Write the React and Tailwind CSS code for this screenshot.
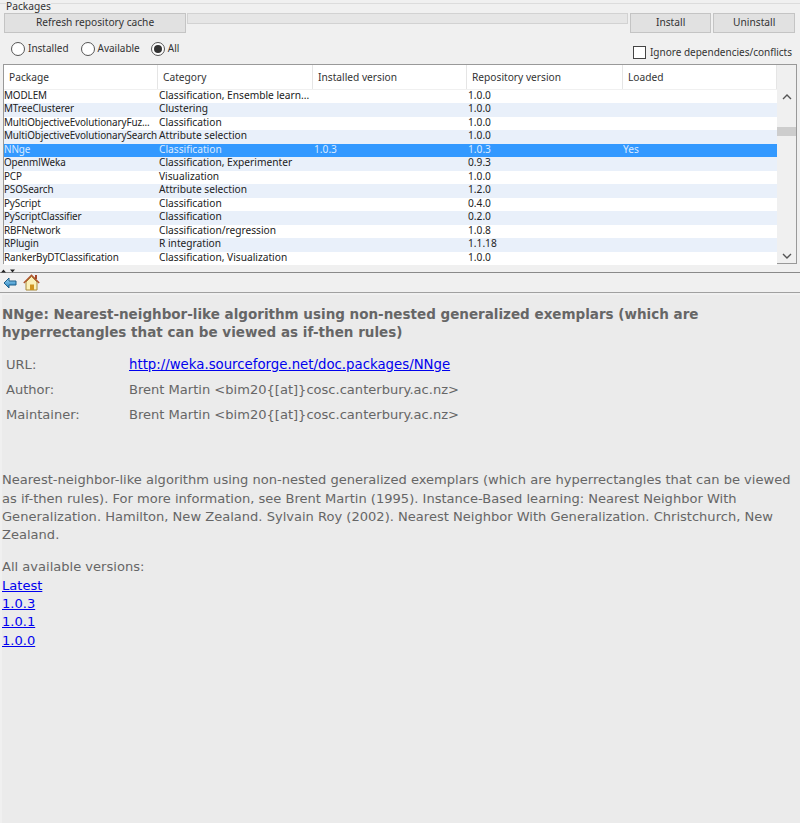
import React from 'react';

const rows = [
  ['MODLEM', 'Classification, Ensemble learn...', '', '1.0.0', ''],
  ['MTreeClusterer', 'Clustering', '', '1.0.0', ''],
  ['MultiObjectiveEvolutionaryFuz...', 'Classification', '', '1.0.0', ''],
  ['MultiObjectiveEvolutionarySearch', 'Attribute selection', '', '1.0.0', ''],
  ['NNge', 'Classification', '1.0.3', '1.0.3', 'Yes'],
  ['OpenmlWeka', 'Classification, Experimenter', '', '0.9.3', ''],
  ['PCP', 'Visualization', '', '1.0.0', ''],
  ['PSOSearch', 'Attribute selection', '', '1.2.0', ''],
  ['PyScript', 'Classification', '', '0.4.0', ''],
  ['PyScriptClassifier', 'Classification', '', '0.2.0', ''],
  ['RBFNetwork', 'Classification/regression', '', '1.0.8', ''],
  ['RPlugin', 'R integration', '', '1.1.18', ''],
  ['RankerByDTClassification', 'Classification, Visualization', '', '1.0.0', ''],
];

const widths = ['w-[155px]', 'w-[155px]', 'w-[154px]', 'w-[155px]', 'w-[154px]'];
const headWidths = ['w-[154px]', 'w-[155px]', 'w-[154px]', 'w-[156px]', 'w-[154px]'];
const headers = ['Package', 'Category', 'Installed version', 'Repository version', 'Loaded'];

function Radio({ label, checked }) {
  return (
    <div className="flex items-center gap-[3px]">
      <span className="w-[14px] h-[14px] rounded-full border border-[#555] bg-white flex items-center justify-center">
        {checked && <span className="w-[8px] h-[8px] rounded-full bg-[#333]" />}
      </span>
      <span>{label}</span>
    </div>
  );
}

function HomeIcon() {
  return (
    <svg width="17" height="17" viewBox="0 0 17 17">
      <path d="M3 8v8h11V8L8.500 2.500z" fill="#fbf0b8" stroke="#a88a3a" />
      <path d="M0.800 9l7.700-7.700L16.200 9" fill="none" stroke="#b0552c" strokeWidth="1.500" />
      <rect x="12" y="1" width="2" height="4" fill="#a5482a" />
      <rect x="7" y="10.500" width="4" height="5.500" fill="#d0941f" />
    </svg>
  );
}

function BackIcon() {
  return (
    <svg width="14" height="12" viewBox="0 0 14 12">
      <defs>
        <linearGradient id="arrowFill" x1="0" y1="0" x2="0" y2="1">
          <stop offset="0" stopColor="#9fd6f2" />
          <stop offset="1" stopColor="#1f7fbf" />
        </linearGradient>
      </defs>
      <path d="M6 1L1 6l5 5V8h7V4H6z" fill="url(#arrowFill)" stroke="#1d5f8a" />
    </svg>
  );
}

export default function App() {
  return (
    <div className="w-[800px] h-[823px] overflow-hidden flex flex-col bg-[#f0f0f0] text-[#333] text-[10.2px] font-['Noto_Sans',sans-serif]">
      <div className="h-[292px] shrink-0 flex flex-col">
        <div className="relative h-[13px] border-t border-[#dcdcdc] mt-[3px]">
          <span className="absolute left-[6px] -top-[4px] bg-[#f0f0f0] leading-[12px]">Packages</span>
        </div>
        <div className="flex h-[20px] -mt-[3px] ml-[4px] mr-[5px] gap-[1px]">
          <button className="w-[183px] h-[20px] bg-[#e1e1e1] border border-[#c4c4c4]">Refresh repository cache</button>
          <div className="w-[443px] h-[11px] bg-[#e6e6e6] border border-[#d2d2d2]" />
          <button className="w-[82px] h-[20px] ml-[1px] bg-[#e1e1e1] border border-[#c4c4c4]">Install</button>
          <button className="w-[82px] h-[20px] ml-[1px] bg-[#e1e1e1] border border-[#c4c4c4]">Uninstall</button>
        </div>
        <div className="flex justify-between items-center h-[31px] ml-[11px] mr-[8px]">
          <div className="flex text-[10px]">
            <Radio label="Installed" />
            <div className="ml-[12px]"><Radio label="Available" /></div>
            <div className="ml-[11px]"><Radio label="All" checked /></div>
          </div>
          <div className="flex items-center gap-[4px] pt-[8px] text-[10px]">
            <span className="w-[13px] h-[13px] border border-[#444] bg-white" />
            <span>Ignore dependencies/conflicts</span>
          </div>
        </div>
        <div className="mx-[3px] h-[200px] border border-[#999] flex bg-[#f0f0f0]">
          <div className="w-[773px]">
            <div className="flex h-[23.500px] bg-white">
              {headers.map((h, i) => (
                <div key={h} className={`${headWidths[i]} flex items-center pl-[5px] pt-[1px] border-r border-[#e5e5e5]`}>{h}</div>
              ))}
            </div>
            <div className="pt-[1px]">
              {rows.map((r, i) => {
                const selected = r[0] === 'NNge';
                const bg = selected ? 'bg-[#3399ff] text-[#dbeaff]' : i % 2 ? 'bg-[#e9f0fa] text-[#222]' : 'bg-white text-[#222]';
                return (
                  <div key={r[0]} className={`h-[13.5px] leading-[10px] whitespace-nowrap ${bg}`}>
                    {r.map((c, j) => (
                      <span key={j} className={`inline-block ${widths[j]} ${j === 0 ? 'text-[9.900px] tracking-[-0.1px]' : ''}`}>{c || '\u00a0'}</span>
                    ))}
                  </div>
                );
              })}
            </div>
          </div>
          <div className="flex-1 flex flex-col items-center justify-between pt-[29px] pb-[4px] relative">
            <svg width="10" height="6" viewBox="0 0 10 6"><path d="M1 5l4-4 4 4" fill="none" stroke="#555" strokeWidth="1.4" /></svg>
            <div className="absolute left-0 right-0 top-[62px] h-[9px] bg-[#cdcdcd]" />
            <svg width="10" height="6" viewBox="0 0 10 6"><path d="M1 1l4 4 4-4" fill="none" stroke="#555" strokeWidth="1.4" /></svg>
          </div>
        </div>
        <div className="relative h-[9px] border-b border-[#8a8a8a]">
          <svg className="absolute left-[1px] top-[5px]" width="14" height="4" viewBox="0 0 14 4"><path d="M0 3.500L2.500 0.500 5 3.500zM9 0.500h5L11.500 3.500z" fill="#222" /></svg>
        </div>
        <div className="flex-1 flex items-center gap-[6px] pl-[3px]">
          <BackIcon />
          <HomeIcon />
        </div>
      </div>
      <div className="flex-1 border-t border-[#a0a0a0] pt-[2px] flex flex-col">
        <div className="flex-1 ml-[2px] bg-[#ebebeb] text-[#666] font-['DejaVu_Sans',sans-serif] text-[13.050px] leading-[18.300px]">
          <h1 className="font-bold text-[13.500px] leading-[18px] mt-[10px] pr-[10px]">NNge: Nearest-neighbor-like algorithm using non-nested generalized exemplars (which are hyperrectangles that can be viewed as if-then rules)</h1>
          <div className="mt-[15px] ml-[4px] flex flex-col gap-[6.700px]">
            <div className="flex"><span className="w-[123px]">URL:</span><a className="text-[#0000ee] underline text-[13.300px]" href="#">http://weka.sourceforge.net/doc.packages/NNge</a></div>
            <div className="flex"><span className="w-[123px]">Author:</span><span>Brent Martin &lt;bim20{'{[at]}'}cosc.canterbury.ac.nz&gt;</span></div>
            <div className="flex"><span className="w-[123px]">Maintainer:</span><span>Brent Martin &lt;bim20{'{[at]}'}cosc.canterbury.ac.nz&gt;</span></div>
          </div>
          <p className="mt-[47px]">Nearest-neighbor-like algorithm using non-nested generalized exemplars (which are hyperrectangles that can be viewed as if-then rules). For more information, see Brent Martin (1995). Instance-Based learning: Nearest Neighbor With Generalization. Hamilton, New Zealand. Sylvain Roy (2002). Nearest Neighbor With Generalization. Christchurch, New Zealand.</p>
          <p className="mt-[14px]">All available versions:</p>
          <div className="flex flex-col items-start">
            {['Latest', '1.0.3', '1.0.1', '1.0.0'].map((v) => (
              <a key={v} className="text-[#0000ee] underline" href="#">{v}</a>
            ))}
          </div>
        </div>
      </div>
    </div>
  );
}
